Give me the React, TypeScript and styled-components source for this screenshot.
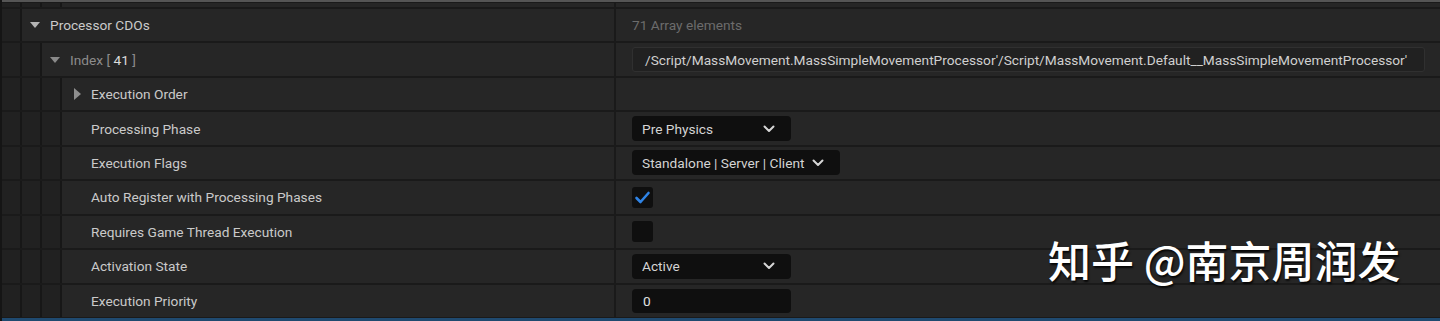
import styled, { createGlobalStyle } from 'styled-components';

const GlobalStyle = createGlobalStyle`
  html, body {
    margin: 0;
    padding: 0;
    background: #262626;
  }
`;

const ROW_H = 34.44;

const DownArrow = ({ color }: { color: string }) => (
  <svg width="10" height="6" viewBox="0 0 10 6">
    <path d="M0 0 L10 0 L5 6 Z" fill={color} />
  </svg>
);

const RightArrow = () => (
  <svg width="7" height="12" viewBox="0 0 7 12">
    <path d="M0 0 L7 6 L0 12 Z" fill="#8e8e8e" />
  </svg>
);

const Chevron = () => (
  <svg width="12" height="8" viewBox="0 0 12 8">
    <path d="M1.5 1.5 L6 6 L10.5 1.5" fill="none" stroke="#d6d6d6" strokeWidth="2" strokeLinecap="round" strokeLinejoin="round" />
  </svg>
);

const Check = () => (
  <svg width="21" height="21" viewBox="0 0 21 21">
    <path d="M4.5 11 L8.5 15 L16.5 6" fill="none" stroke="#2f84e6" strokeWidth="2.6" strokeLinecap="round" strokeLinejoin="round" />
  </svg>
);

type LineProps = {
  depth: number;
  height?: number;
  children?: React.ReactNode;
  value?: React.ReactNode;
};

const Line = ({ depth, height, children, value }: LineProps) => (
  <Row $h={height ?? ROW_H}>
    <NameSide>
      {Array.from({ length: depth }).map((_, i) => (
        <Indent key={i} />
      ))}
      <NameCell $deep={depth >= 3}>{children}</NameCell>
    </NameSide>
    <ValueSide>{value}</ValueSide>
  </Row>
);

const App = () => {
  return (
    <>
      <GlobalStyle />
      <Panel>
        {/* bottom of the row above */}
        <TopEdge>
          <Line depth={3} height={6} />
        </TopEdge>

        <Line depth={1} value={<Muted>71 Array elements</Muted>}>
          <Expander>
            <DownArrow color="#b4b4b4" />
          </Expander>
          <Label>Processor CDOs</Label>
        </Line>

        <Line
          depth={2}
          value={
            <PathBox>
              /Script/MassMovement.MassSimpleMovementProcessor'/Script/MassMovement.Default__MassSimpleMovementProcessor'
            </PathBox>
          }
        >
          <Expander>
            <DownArrow color="#8a8a8a" />
          </Expander>
          <Label $dim>
            Index [ <b>41</b> ]
          </Label>
        </Line>

        <Line depth={3}>
          <Expander $offset={3}>
            <RightArrow />
          </Expander>
          <Label>Execution Order</Label>
        </Line>

        <Line
          depth={3}
          value={
            <Combo $w={159}>
              <span>Pre Physics</span>
              <Chevron />
            </Combo>
          }
        >
          <Expander />
          <Label>Processing Phase</Label>
        </Line>

        <Line
          depth={3}
          value={
            <Combo $w={208}>
              <span>Standalone | Server | Client</span>
              <Chevron />
            </Combo>
          }
        >
          <Expander />
          <Label>Execution Flags</Label>
        </Line>

        <Line
          depth={3}
          value={
            <CheckBox>
              <Check />
            </CheckBox>
          }
        >
          <Expander />
          <Label>Auto Register with Processing Phases</Label>
        </Line>

        <Line depth={3} value={<CheckBox />}>
          <Expander />
          <Label>Requires Game Thread Execution</Label>
        </Line>

        <Line
          depth={3}
          value={
            <Combo $w={159}>
              <span>Active</span>
              <Chevron />
            </Combo>
          }
        >
          <Expander />
          <Label>Activation State</Label>
        </Line>

        <Line depth={3} value={<NumberBox>0</NumberBox>}>
          <Expander />
          <Label>Execution Priority</Label>
        </Line>

        <BottomBar />

        <Watermark>知乎 @南京周润发</Watermark>
      </Panel>
    </>
  );
};

export default App;

const Panel = styled.div`
  position: relative;
  width: 1440px;
  height: 321px;
  overflow: hidden;
  box-sizing: border-box;
  border-left: 2px solid #151515;
  background: #262626;
  font-family: Roboto, 'Liberation Sans', sans-serif;
  font-size: 13.7px;
`;

const TopEdge = styled.div`
  border-top: 2px solid #555555;
`;

const Row = styled.div<{ $h: number }>`
  display: flex;
  height: ${(p) => p.$h}px;
  box-sizing: border-box;
  border-top: 1px solid #1a1a1a;
  border-bottom: 1px solid #1a1a1a;
  background: #262626;
`;

const NameSide = styled.div`
  display: flex;
  flex: none;
  width: 614px;
  box-sizing: border-box;
  border-right: 2px solid #1a1a1a;
`;

const Indent = styled.div`
  flex: none;
  width: 20px;
  box-sizing: border-box;
  background: #212121;
  border-right: 2px solid #171717;
`;

const NameCell = styled.div<{ $deep?: boolean }>`
  flex: 1;
  display: flex;
  align-items: center;
  padding-left: ${(p) => (p.$deep ? 9 : 8)}px;
  min-width: 0;
`;

const Expander = styled.div<{ $offset?: number }>`
  flex: none;
  width: 20px;
  display: flex;
  align-items: center;
  padding-left: ${(p) => p.$offset ?? 0}px;
  box-sizing: border-box;
`;

const Label = styled.span<{ $dim?: boolean }>`
  color: ${(p) => (p.$dim ? '#8c8c8c' : '#cacaca')};
  white-space: nowrap;

  b {
    font-weight: 400;
    color: #dcdcdc;
  }
`;

const ValueSide = styled.div`
  flex: 1;
  display: flex;
  align-items: center;
  padding: 0 15px 0 16px;
  min-width: 0;
`;

const Muted = styled.span`
  color: #6c6c6c;
`;

const PathBox = styled.div`
  flex: 1;
  height: 25px;
  display: flex;
  align-items: center;
  box-sizing: border-box;
  padding-left: 12px;
  background: #212121;
  border: 1px solid #303030;
  border-radius: 3px;
  color: #d0d0d0;
  white-space: nowrap;
  overflow: hidden;
`;

const Combo = styled.div<{ $w: number }>`
  width: ${(p) => p.$w}px;
  height: 25px;
  display: flex;
  align-items: center;
  justify-content: space-between;
  box-sizing: border-box;
  padding: 0 16px 0 10px;
  background: #0f0f0f;
  border-radius: 4px;
  color: #d4d4d4;
  white-space: nowrap;
`;

const NumberBox = styled.div`
  width: 159px;
  height: 24px;
  display: flex;
  align-items: center;
  box-sizing: border-box;
  padding-left: 11px;
  background: #0f0f0f;
  border-radius: 4px;
  color: #e0e0e0;
`;

const CheckBox = styled.div`
  width: 21px;
  height: 21px;
  background: #0f0f0f;
  border-radius: 3px;
  display: flex;
  align-items: center;
  justify-content: center;
`;

const BottomBar = styled.div`
  height: 3px;
  background: #1f4a70;
`;

const Watermark = styled.div`
  position: absolute;
  left: 1046px;
  top: 228px;
  font-family: 'Noto Sans CJK SC', 'Noto Sans', sans-serif;
  font-size: 43px;
  font-weight: 500;
  color: #ffffff;
  white-space: nowrap;
  text-shadow: 1px 2px 2px rgba(0, 0, 0, 0.85);
  pointer-events: none;
`;
